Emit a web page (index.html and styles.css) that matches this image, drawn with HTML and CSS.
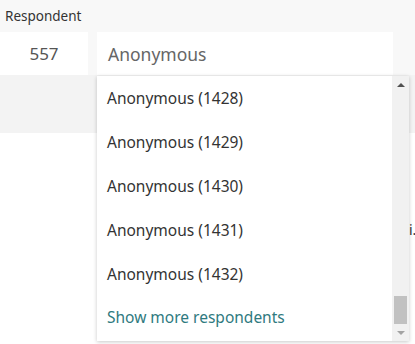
FILE: index.html
```html
<!DOCTYPE html>
<html>
<head>
<meta charset="utf-8">
<link rel="stylesheet" href="styles.css">
</head>
<body>
<div class="page">
  <div class="label-row">Respondent</div>
  <div class="field-row">
    <div class="count">557</div>
    <div class="picker">Anonymous</div>
  </div>
  <div class="gray-band"></div>
  <div class="rest">
    <div class="peek">i.</div>
  </div>
  <div class="dropdown">
    <div class="list">
      <div class="item">Anonymous (1428)</div>
      <div class="item">Anonymous (1429)</div>
      <div class="item">Anonymous (1430)</div>
      <div class="item">Anonymous (1431)</div>
      <div class="item">Anonymous (1432)</div>
      <div class="item more">Show more respondents</div>
    </div>
    <div class="scrollbar">
      <div class="arrow up"></div>
      <div class="track"><div class="thumb"></div></div>
      <div class="arrow down"></div>
    </div>
  </div>
</div>
</body>
</html>
```
FILE: styles.css
```css
html, body {
  margin: 0;
  padding: 0;
  background: #ffffff;
}
.page {
  position: relative;
  width: 415px;
  height: 344px;
  overflow: hidden;
  font-family: "Noto Sans", "Open Sans", sans-serif;
  background: #ffffff;
}
.label-row {
  height: 32px;
  background: #f8f8f8;
  font-size: 13.5px;
  color: #333333;
  padding-left: 5px;
  line-height: 32px;
  box-sizing: border-box;
}
.field-row {
  display: flex;
  gap: 9px;
  height: 43px;
  background: #f8f8f8;
  padding-right: 22px;
}
.count {
  width: 88px;
  background: #ffffff;
  display: flex;
  align-items: center;
  justify-content: center;
  font-size: 17px;
  color: #555555;
}
.picker {
  flex: 1;
  background: #ffffff;
  display: flex;
  align-items: center;
  padding-left: 11px;
  font-size: 17.5px;
  color: #666666;
}
.gray-band {
  height: 58px;
  background: #f3f3f3;
}
.rest {
  position: relative;
  height: 211px;
  background: #ffffff;
}
.peek {
  position: absolute;
  left: 409px;
  top: 87px;
  font-size: 14px;
  color: #333;
}
.dropdown {
  position: absolute;
  left: 97px;
  top: 76px;
  width: 312px;
  height: 265px;
  background: #ffffff;
  box-shadow: 0 1px 4px rgba(0,0,0,0.22);
  display: flex;
}
.list {
  flex: 1;
  padding-top: 0;
}
.item {
  height: 43.9px;
  display: flex;
  align-items: center;
  padding-left: 10px;
  font-size: 15.5px;
  color: #333333;
}
.item.more {
  color: #2f7a80;
}
.scrollbar {
  width: 17px;
  background: #f1f1f1;
  display: flex;
  flex-direction: column;
}
.arrow {
  height: 17px;
  display: flex;
  align-items: center;
  justify-content: center;
}
.arrow.up::before {
  content: "";
  border-left: 4px solid transparent;
  border-right: 4px solid transparent;
  border-bottom: 4px solid #505050;
}
.arrow.down::before {
  content: "";
  border-left: 4px solid transparent;
  border-right: 4px solid transparent;
  border-top: 4px solid #a3a3a3;
}
.track {
  flex: 1;
  display: flex;
  flex-direction: column;
  justify-content: flex-end;
  padding: 0 2px;
}
.thumb {
  height: 28px;
  background: #c1c1c1;
}
```
